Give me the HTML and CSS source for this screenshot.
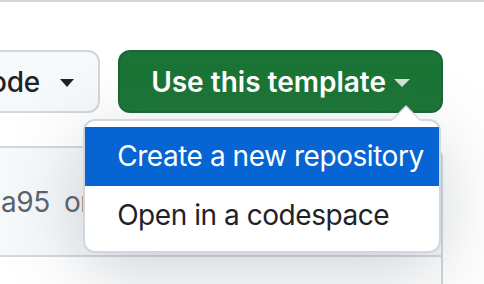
FILE: index.html
```html
<!DOCTYPE html>
<html>
<head>
  <meta charset="UTF-8">
  <title>Use this template</title>
  <link rel="stylesheet" href="styles.css">
</head>
<body>
  <div class="topline"></div>

  <!-- Repo action buttons -->
  <div class="actions">
    <button class="btn btn-code">Code <span class="caret"></span></button>

    <div class="template">
      <button class="btn btn-primary">Use this template <span class="caret caret-light"></span></button>

      <!-- Template dropdown -->
      <div class="menu">
        <a class="menu-item active" href="#">Create a new repository</a>
        <a class="menu-item" href="#">Open in a codespace</a>
      </div>
    </div>
  </div>

  <!-- File list behind the menu -->
  <div class="files">
    <div class="files-head">
      <span class="sha">a95</span>
      <span class="on">or</span>
    </div>
    <div class="files-row"></div>
  </div>
</body>
</html>
```

FILE: styles.css
```css
body {
  font-family: Inter, "Liberation Sans", sans-serif;
  background: #fff;
  margin: 0;
  overflow: hidden;
  height: 284px;
  color: #1f2328;
}

.topline {
  height: 2px;
  background: #d0d7de;
}

.actions {
  display: flex;
  justify-content: flex-end;
  align-items: center;
  gap: 18px;
  margin-top: 48px;
  padding-right: 41px;
}

.btn {
  flex-shrink: 0;
  display: flex;
  align-items: center;
  height: 63px;
  border-radius: 12px;
  font-family: inherit;
  font-size: 28px;
  font-weight: 500;
  box-sizing: border-box;
  white-space: nowrap;
}

.btn-code {
  background: #f6f8fa;
  border: 2px solid #d0d7de;
  color: #1f2328;
  padding: 0 24px 0 24px;
  gap: 20px;
  letter-spacing: -0.2px;
}

.btn-primary {
  background: #1a7435;
  border: 2px solid rgba(31, 35, 40, 0.15);
  color: #fff;
  padding: 0 31px 0 31px;
  gap: 8px;
  font-weight: 600;
}

.caret {
  width: 0;
  height: 0;
  border-left: 7px solid transparent;
  border-right: 7px solid transparent;
  border-top: 8px solid #1f2328;
  margin-top: 2px;
}

.caret-light {
  border-left-width: 8px;
  border-right-width: 8px;
  border-top-color: rgba(255, 255, 255, 0.8);
}

.template {
  position: relative;
}

.menu {
  position: absolute;
  top: 69px;
  left: -35px;
  width: 358px;
  box-sizing: border-box;
  padding: 6px 0 6px;
  background: #fff;
  border: 2px solid #d0d7de;
  border-radius: 12px;
  box-shadow: 0 20px 72px rgba(101, 109, 118, 0.3);
  z-index: 2;
}

.menu::before,
.menu::after {
  content: "";
  position: absolute;
  width: 0;
  height: 0;
  border-style: solid;
  border-color: transparent;
}

.menu::before {
  top: -16px;
  left: 305px;
  border-width: 0 16px 16px;
  border-bottom-color: #d0d7de;
}

.menu::after {
  top: -14px;
  left: 307px;
  border-width: 0 14px 14px;
  border-bottom-color: #fff;
}

.menu-item {
  display: block;
  padding: 8px 32px;
  line-height: 43px;
  font-size: 28px;
  letter-spacing: -0.45px;
  white-space: nowrap;
  color: #1f2328;
  text-decoration: none;
}

.menu-item.active {
  background: #0664d3;
  color: #fff;
}

.files {
  margin: 33px 41px 0 -20px;
  border: 2px solid #d0d7de;
  border-radius: 12px;
}

.files-head {
  display: flex;
  align-items: center;
  gap: 14px;
  height: 107px;
  padding-left: 19px;
  background: #f6f8fa;
  border-bottom: 2px solid #d0d7de;
  border-radius: 12px 12px 0 0;
  color: #59636e;
  font-size: 28px;
  letter-spacing: -0.4px;
}

.files-row {
  height: 60px;
}
```
